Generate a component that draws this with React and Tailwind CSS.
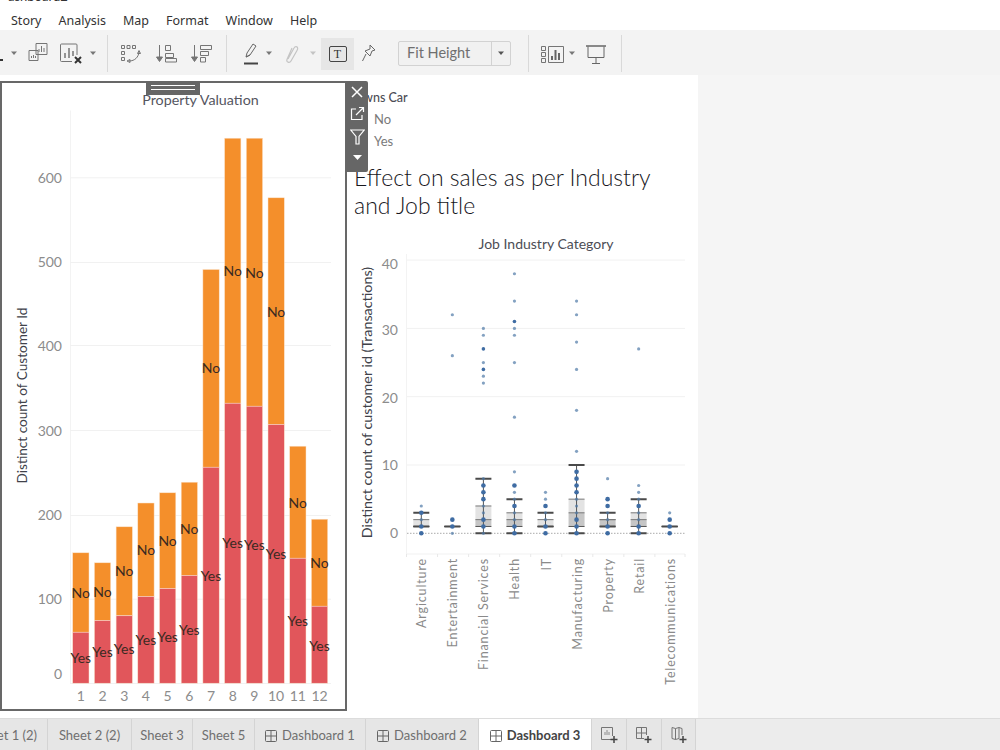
const orange = "#f48f2b";
const red = "#e1565b";
const gray = "#757575";

// page coordinates read off the screenshot: [total top, yes top, no label y, yes label y]
const bars = [
  [552.3, 631.7, 592, 657.5],
  [562.3, 620, 591, 651],
  [526.3, 615.3, 570.7, 648.5],
  [502.5, 596, 549, 639],
  [492.3, 588, 540.5, 636],
  [481.7, 575, 528.5, 629.5],
  [269, 466.7, 367.7, 575],
  [137.7, 402.7, 270, 542.5],
  [137.7, 405.7, 272.7, 544.5],
  [197.3, 424, 311.7, 553],
  [445.7, 557.7, 502, 620.5],
  [518.7, 605.7, 562, 645],
];

const boxes = [
  { name: "Argiculture", lo: 1, q1: 1, med: 1, q3: 2, hi: 3, dark: [0, 1, 3], light: [2, 4] },
  { name: "Entertainment", lo: 1, q1: 1, med: 1, q3: 1, hi: 1, dark: [1, 2], light: [0, 26, 32] },
  { name: "Financial Services", lo: 0, q1: 1, med: 2, q3: 4, hi: 8, dark: [1, 2, 5, 6, 7, 24, 27], light: [0, 3, 4, 8, 22, 23, 25, 29, 30] },
  { name: "Health", lo: 0, q1: 1, med: 2, q3: 3, hi: 5, dark: [0, 1, 4, 7, 31], light: [2, 3, 5, 6, 9, 17, 25, 29, 30, 34, 38] },
  { name: "IT", lo: 1, q1: 1, med: 1, q3: 2, hi: 3, dark: [0, 1, 4], light: [2, 3, 5, 6] },
  { name: "Manufacturing", lo: 0, q1: 1, med: 3, q3: 5, hi: 10, dark: [0, 1, 2, 6, 7, 8, 9], light: [3, 4, 5, 12, 18, 24, 28, 32, 34] },
  { name: "Property", lo: 1, q1: 1, med: 2, q3: 2, hi: 3, dark: [0, 1, 4, 5], light: [2, 3, 8] },
  { name: "Retail", lo: 0, q1: 1, med: 2, q3: 3, hi: 5, dark: [0, 1, 4], light: [2, 3, 5, 6, 7, 27] },
  { name: "Telecommunications", lo: 1, q1: 1, med: 1, q3: 1, hi: 1, dark: [0, 1, 2], light: [3] },
];

const menus = ["Story", "Analysis", "Map", "Format", "Window", "Help"];

const tabs = [
  { label: "et 1 (2)", w: "w-[48px]", end: true },
  { label: "Sheet 2 (2)", w: "w-[84px]" },
  { label: "Sheet 3", w: "w-[61px]" },
  { label: "Sheet 5", w: "w-[62px]" },
  { label: "Dashboard 1", w: "w-[111px]", grid: true },
  { label: "Dashboard 2", w: "w-[113px]", grid: true },
  { label: "Dashboard 3", w: "w-[113px]", grid: true, active: true },
];

const Caret = ({ className = "", color = "#777" }) => (
  <svg width="8" height="5" viewBox="0 0 8 5" className={`shrink-0 ${className}`}>
    <path d="M1 .5h6L4 4z" fill={color} />
  </svg>
);

const Sep = ({ className = "" }) => <div className={`h-[37px] w-px shrink-0 bg-[#d9d9d9] ${className}`} />;

const Ico = ({ w, h = 22, className = "", children }) => (
  <svg width={w} height={h} viewBox={`0 0 ${w} ${h}`} fill="none" stroke={gray} strokeWidth="1" className={`shrink-0 ${className}`}>
    {children}
  </svg>
);

const GridIcon = () => (
  <svg width="12" height="12" viewBox="0 0 12 12" fill="none" stroke="#666" strokeWidth="1" className="shrink-0">
    <path d="M1.5.5h9a1 1 0 0 1 1 1v9a1 1 0 0 1-1 1h-9a1 1 0 0 1-1-1v-9a1 1 0 0 1 1-1zM6 .5v11M.5 6h11" />
  </svg>
);

const Toolbar = () => (
  <div className="flex h-[45px] items-center bg-[#f3f3f3] pt-[2px]">
    <div className="mt-[12px] h-[2px] w-[3px] shrink-0 bg-[#333]" />
    <Caret className="ml-[7px]" />
    <Ico w={20} className="ml-[10px]">
      <path d="M8 .5h11v11H8zM1 7.5h9v10H1z" fill="#f3f3f3" />
      <path d="M11 9V6M13.500 9V3M16 9V5M3.500 15v-2M5.500 15v-3M7.500 15v-2" />
    </Ico>
    <Ico w={23} className="ml-[12px]">
      <path d="M12 18.500H1.500a1 1 0 0 1-1-1V2a1 1 0 0 1 1-1H16a1 1 0 0 1 1 1v10" />
      <path d="M5 15v-5M9 15V5M13 13V8" strokeWidth="1.500" />
      <path d="M15 14l6 6M21 14l-6 6" stroke="#333" strokeWidth="2" />
    </Ico>
    <Caret className="ml-[6px]" />
    <Sep className="ml-[10px]" />
    <Ico w={20} className="ml-[13px]">
      <path d="M.5 2.500h3v3h-3zM6 2.500h3v3H6zM11.500 2.500h3v3h-3zM.5 8.500h3v3h-3zM.5 14.500h3v3h-3z" />
      <path d="M18 9c-.5 5-4 9-10 9M18 7.500l-1.500 3h3zM6 18l3-1.500v3z" fill="none" />
    </Ico>
    <Ico w={21} className="ml-[15px]">
      <path d="M3.500 2v15" />
      <path d="M.5 14l3 4.500 3-4.500z" fill={gray} />
      <path d="M9.500 2.500h5v5h-5zM9.500 10.500h8v4h-8zM9.500 15.500h11v3.500h-11z" />
    </Ico>
    <Ico w={21} className="ml-[14px]">
      <path d="M3.500 2v15" />
      <path d="M.5 14l3 4.500 3-4.500z" fill={gray} />
      <path d="M9.500 2.500h11v4h-11zM9.500 8.500h8v4h-8zM9.500 14.500h5v4.500h-5z" />
    </Ico>
    <Sep className="ml-[14px]" />
    <Ico w={16} className="ml-[16px]">
      <path d="M3 14l1-4 6-9 3 2-6 9z" stroke="#666" />
      <path d="M3 14l4-2" stroke="#666" />
      <path d="M1 20.500h14" stroke="#444" strokeWidth="2" />
    </Ico>
    <Caret className="ml-[6px]" />
    <Ico w={15} className="ml-[11px]">
      <path d="M4 16l6-11c1-2 3-1.500 3.500-.5s.5 1.500-.5 3l-6 10.500c-1.500 2.500-5 1-4-1.500L8 5" stroke="#c4c4c4" strokeWidth="1.200" />
    </Ico>
    <Caret className="ml-[10px]" color="#c4c4c4" />
    <div className="ml-[4px] flex h-[32px] w-[33px] shrink-0 items-center justify-center bg-[#e6e6e6]">
      <div className="flex h-[16px] w-[18px] items-center justify-center rounded-[2px] border border-[#444] font-['Liberation_Serif',serif] text-[12px] leading-none text-[#333]">
        T
      </div>
    </div>
    <Ico w={16} className="ml-[7px]">
      <path d="M9 2l5 5-3 1-2 5-5-5 5-2zM5 11l-3.500 7" stroke="#666" />
    </Ico>
    <div className="ml-[21px] flex h-[25px] w-[113px] shrink-0 rounded-[2px] border border-[#d2d2d2] bg-[#f1f1f1]">
      <div className="flex-1 pl-[8px] text-[14.5px] leading-[22px] text-[#6f6f6f]">Fit Height</div>
      <div className="flex w-[19px] items-center justify-center border-l border-[#d2d2d2]">
        <Caret color="#555" />
      </div>
    </div>
    <Sep className="ml-[17px]" />
    <Ico w={24} className="ml-[12px]">
      <path d="M.5 3.500h4v4h-4zM.5 9.500h4v4h-4zM.5 15.500h4v4h-4zM7.500 3.500h15v16h-15z" />
      <path d="M11 17v-4M14.500 17V7M18 17v-7" strokeWidth="2" stroke="#666" />
    </Ico>
    <Caret className="ml-[3px]" />
    <Ico w={20} className="ml-[10px]">
      <path d="M0 3h20" strokeWidth="1.500" stroke="#666" />
      <path d="M2 3.500v11h16v-11M10 15v5M6 20.500h8" stroke="#666" />
    </Ico>
    <Sep className="ml-[15px]" />
  </div>
);

const BarChart = () => (
  <svg viewBox="2 83 343 625" className="block h-full w-full">
    <path d="M70.500 110v573" stroke="#f3f3f3" />
    {[177.3, 262, 345, 430, 515, 598.7, 683].map((y) => (
      <path key={y} d={`M70 ${y}h261`} stroke="#f1f1f1" />
    ))}
    {[[178, 600], [262.500, 500], [346, 400], [431, 300], [515, 200], [599, 100], [674, 0]].map(([y, v]) => (
      <text key={v} x="62" y={y + 4} textAnchor="end" fontSize="14" fill="#8c8c8c">
        {v}
      </text>
    ))}
    {bars.map(([top, yes], i) => {
      const x = 72.7 + 21.7 * i;
      return (
        <g key={i} stroke="#fbe3cc" strokeWidth="0.500">
          <rect x={x} y={top} width="16.300" height={yes - top} fill={orange} />
          <rect x={x} y={yes} width="16.300" height={682.7 - yes} fill={red} />
        </g>
      );
    })}
    {bars.map(([, , noY, yesY], i) => {
      const cx = 80.8 + 21.7 * i;
      return (
        <g key={i} fontSize="14" fill="#3a2a22" textAnchor="middle">
          <text x={cx} y={noY + 5}>No</text>
          <text x={cx} y={yesY + 5}>Yes</text>
        </g>
      );
    })}
    {bars.map((_, i) => (
      <text key={i} x={80.8 + 21.7 * i} y="700" textAnchor="middle" fontSize="14" fill="#8c8c8c">
        {i + 1}
      </text>
    ))}
    <text x="200.500" y="104" textAnchor="middle" fontSize="14.300" fill="#55565f">Property Valuation</text>
    <text transform="translate(27 395) rotate(-90)" textAnchor="middle" fontSize="13.600" fill="#40424a">
      Distinct count of Customer Id
    </text>
  </svg>
);

const yOf = (v) => 533.3 - 6.83 * v;

const BoxChart = () => (
  <svg viewBox="347 225 351 470" className="block h-[470px] w-[351px]">
    <path d="M406.500 254v300" stroke="#f3f3f3" />
    {[40, 30, 20, 10].map((v) => (
      <path key={v} d={`M407 ${yOf(v)}h278`} stroke="#f1f1f1" />
    ))}
    <path d={`M407 ${yOf(0)}h278`} stroke="#aaa" strokeDasharray="1.500 1.500" />
    <path d="M407 554h278" stroke="#f1f1f1" />
    {boxes.map((_, i) => (
      <path key={i} d={`M${406.5 + 31.05 * i} 554v3`} stroke="#e8e8e8" />
    ))}
    <path d="M685 554v3" stroke="#e8e8e8" />
    {[[264, 40], [330, 30], [398, 20], [465, 10], [533, 0]].map(([y, v]) => (
      <text key={v} x="398" y={y + 5} textAnchor="end" fontSize="14" fill="#8c8c8c">
        {v}
      </text>
    ))}
    {boxes.map((b, i) => {
      const cx = 421.3 + 31.05 * i;
      return (
        <g key={b.name}>
          <rect x={cx - 8} y={yOf(b.q3)} width="16" height={yOf(b.med) - yOf(b.q3)} fill="#e3e3e3" />
          <rect x={cx - 8} y={yOf(b.med)} width="16" height={yOf(b.q1) - yOf(b.med)} fill="#c6c6c6" />
          <path d={`M${cx} ${yOf(b.hi)}V${yOf(b.lo)}`} stroke="#555" />
          <path d={`M${cx - 8} ${yOf(b.q3)}h16M${cx - 8} ${yOf(b.med)}h16`} stroke="#777" />
          <path d={`M${cx - 8} ${yOf(b.q1)}h16`} stroke="#555" />
          <path d={`M${cx - 8} ${yOf(b.hi)}h16M${cx - 8} ${yOf(b.lo)}h16`} stroke="#4a4a4a" strokeWidth="2" />
          {b.light.map((v) => (
            <circle key={v} cx={cx} cy={yOf(v)} r="1.600" fill="#4e79a7" opacity="0.700" />
          ))}
          {b.dark.map((v) => (
            <circle key={v} cx={cx} cy={yOf(v)} r={v > 10 ? 1.8 : 2.3} fill="#3f6ca3" />
          ))}
          <text
            transform={`translate(${cx + 5} 558) rotate(-90)`}
            textAnchor="end"
            fontSize="12.500"
            letterSpacing="0.85"
            fill="#8a8a8a"
          >
            {b.name}
          </text>
        </g>
      );
    })}
    <text x="546" y="249" textAnchor="middle" fontSize="14" fill="#4c4d55">Job Industry Category</text>
    <text transform="translate(372 402.500) rotate(-90)" textAnchor="middle" fontSize="14.300" fill="#40424a">
      Distinct count of customer id (Transactions)
    </text>
  </svg>
);

const App = () => {
  return (
    <div className="flex h-[750px] w-[1000px] flex-col overflow-hidden bg-white font-['Lato',sans-serif]">
      {/* title + menu */}
      <div className="h-[30px] shrink-0 overflow-hidden">
        <div className="mt-[-11px] h-[14px] pl-[8px] text-[13px] leading-[14px] text-[#333]">ashboard2</div>
        <div className="mt-[10px] flex gap-[17px] pl-[11px] font-['Noto_Sans',sans-serif] text-[12.5px] leading-[16px] text-[#333]">
          {menus.map((m) => (
            <span key={m}>{m}</span>
          ))}
        </div>
      </div>

      <Toolbar />

      {/* canvas */}
      <div className="relative flex min-h-0 flex-1 bg-[#f5f5f5]">
        <div className="flex w-[698px] shrink-0 bg-white">
          <div className="mt-[6px] h-[630px] w-[347px] shrink-0 border-2 border-[#686868]">
            <BarChart />
          </div>
          <div className="w-[351px] pt-[12px]">
            <div className="pl-[6px] text-[12.5px] font-medium leading-[21px] text-[#4c4d55]">Owns Car</div>
            <div className="pl-[27px] text-[13px] leading-[22px] text-[#7a7a7a]">No</div>
            <div className="pl-[27px] text-[13px] leading-[22px] text-[#7a7a7a]">Yes</div>
            <div className="mt-[11px] pl-[7px] text-[23px] font-light leading-[28px] text-[#17171c]">
              Effect on sales as per Industry
              <br />
              and Job title
            </div>
            <div className="mt-[6px]">
              <BoxChart />
            </div>
          </div>
        </div>

        {/* drag handle */}
        <div className="absolute left-[146px] top-[6px] flex h-[14px] w-[54px] flex-col items-center gap-[3px] bg-[#666] pt-[4px]">
          <div className="h-px w-[44px] bg-white" />
          <div className="h-px w-[44px] bg-white" />
        </div>

        {/* floating controls */}
        <div className="absolute left-[346px] top-[6px] flex h-[91px] w-[22px] flex-col items-center rounded-r-[2px] bg-[#666] pt-[4px]">
          <svg width="14" height="14" viewBox="0 0 14 14" stroke="#fff" strokeWidth="1.500" fill="none">
            <path d="M2 2l10 10M12 2L2 12" />
          </svg>
          <svg width="15" height="15" viewBox="0 0 15 15" stroke="#fff" strokeWidth="1.200" fill="none" className="mt-[7px]">
            <path d="M12 9v4.500H1.500V3H6M6 9l7.500-7.500M9 1.500h4.500V6" />
          </svg>
          <svg width="15" height="16" viewBox="0 0 15 16" stroke="#fff" strokeWidth="1.200" fill="none" className="mt-[8px]">
            <path d="M.8 1h13.400L9 7.500v7.500H6V7.500z" />
          </svg>
          <svg width="9" height="5" viewBox="0 0 9 5" className="mt-[10px]">
            <path d="M0 0h9L4.500 5z" fill="#fff" />
          </svg>
        </div>
      </div>

      {/* sheet tabs */}
      <div className="flex h-[32px] shrink-0 border-t border-[#dcdcdc] bg-[#ececec]">
        {tabs.map((t) => (
          <div
            key={t.label}
            className={`flex shrink-0 items-center gap-[5px] whitespace-nowrap border-r border-[#d4d4d4] pt-[2px] text-[13px] ${t.w} ${
              t.end ? "justify-end pr-[10px]" : "justify-center"
            } ${t.active ? "bg-white font-bold text-[#444]" : "bg-[#e6e6e6] text-[#6f6f6f]"}`}
          >
            {t.grid && <GridIcon />}
            {t.label}
          </div>
        ))}
        <div className="flex w-[35px] shrink-0 items-center justify-center border-r border-[#d4d4d4] bg-[#e6e6e6]">
          <Ico w={18} h={18}>
            <path d="M12 13.500H1.500v-12h11V10" />
            <path d="M5 9V6M7 9V4M9 9V6" strokeWidth="0.800" />
            <path d="M14 10v7M10.500 13.500h7" stroke="#444" strokeWidth="1.500" />
          </Ico>
        </div>
        <div className="flex w-[35px] shrink-0 items-center justify-center border-r border-[#d4d4d4] bg-[#e6e6e6]">
          <Ico w={18} h={18}>
            <path d="M9 12.500H1.500v-11h10V9M6.500 1.500v11M1.500 7h10" />
            <path d="M13 10v7M9.500 13.500h7" stroke="#444" strokeWidth="1.500" />
          </Ico>
        </div>
        <div className="flex w-[34px] shrink-0 items-center justify-center border-r border-[#d4d4d4] bg-[#e6e6e6]">
          <Ico w={18} h={18}>
            <path d="M9 12.500l-3.500 1-3.500-1v-11l3.500 1 3.500-1 3 1V9M5.500 2.500v11M9 1.500v11" />
            <path d="M13 10v7M9.500 13.500h7" stroke="#444" strokeWidth="1.500" />
          </Ico>
        </div>
      </div>
    </div>
  );
};

export default App;
